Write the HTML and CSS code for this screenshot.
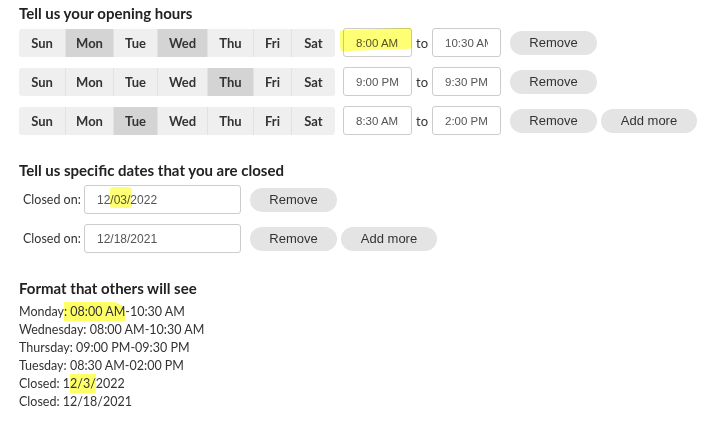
FILE: index.html
```html
<!DOCTYPE html>
<html lang="en">
<head>
    <meta charset="UTF-8">
    <title>Opening hours</title>
    <link rel="stylesheet" href="styles.css">
</head>
<body>
    <div class="page">
        <h2>Tell us your opening hours</h2>
        <div class="hours-list">
            <div class="hours-row">
                <div class="days">
                    <span class="day">Sun</span>
                    <span class="day on">Mon</span>
                    <span class="day">Tue</span>
                    <span class="day on">Wed</span>
                    <span class="day">Thu</span>
                    <span class="day">Fri</span>
                    <span class="day">Sat</span>
                </div>
                <input class="time" type="text" value="8:00 AM">
                <span class="to">to</span>
                <input class="time" type="text" value="10:30 AM">
                <button class="pill">Remove</button>
            </div>
            <div class="hours-row">
                <div class="days">
                    <span class="day">Sun</span>
                    <span class="day">Mon</span>
                    <span class="day">Tue</span>
                    <span class="day">Wed</span>
                    <span class="day on">Thu</span>
                    <span class="day">Fri</span>
                    <span class="day">Sat</span>
                </div>
                <input class="time" type="text" value="9:00 PM">
                <span class="to">to</span>
                <input class="time" type="text" value="9:30 PM">
                <button class="pill">Remove</button>
            </div>
            <div class="hours-row">
                <div class="days">
                    <span class="day">Sun</span>
                    <span class="day">Mon</span>
                    <span class="day on">Tue</span>
                    <span class="day">Wed</span>
                    <span class="day">Thu</span>
                    <span class="day">Fri</span>
                    <span class="day">Sat</span>
                </div>
                <input class="time" type="text" value="8:30 AM">
                <span class="to">to</span>
                <input class="time" type="text" value="2:00 PM">
                <button class="pill">Remove</button>
                <button class="pill wide">Add more</button>
            </div>
        </div>

        <h2 class="next">Tell us specific dates that you are closed</h2>
        <div class="closed-list">
            <div class="closed-row">
                <label>Closed on:</label>
                <input class="date" type="text" value="12/03/2022">
                <button class="pill">Remove</button>
            </div>
            <div class="closed-row">
                <label>Closed on:</label>
                <input class="date" type="text" value="12/18/2021">
                <button class="pill">Remove</button>
                <button class="pill wide">Add more</button>
            </div>
        </div>

        <h2 class="next">Format that others will see</h2>
        <div class="preview">
            <div>Monday<span class="hl curl">: 08:00 AM</span>-10:30 AM</div>
            <div>Wednesday: 08:00 AM-10:30 AM</div>
            <div>Thursday: 09:00 PM-09:30 PM</div>
            <div>Tuesday: 08:30 AM-02:00 PM</div>
            <div>Closed: 1<span class="hl">2/3/</span>2022</div>
            <div>Closed: 12/18/2021</div>
        </div>
    </div>

    <!-- marker strokes that sit over the input boxes -->
    <div class="marker m1"></div>
    <div class="marker m2"></div>
</body>
</html>
```

FILE: styles.css
```css
* {
    margin: 0;
    padding: 0;
    box-sizing: border-box;
}

body {
    font-family: 'Lato', sans-serif;
    background: #fff;
    color: #333;
}

.page {
    padding: 3px 0 0 19px;
}

h2 {
    font-size: 15px;
    font-weight: bold;
    line-height: 20px;
    color: #222;
    margin-bottom: 5px;
}

h2.next {
    margin-top: 25px;
}

.hours-list, .closed-list {
    display: flex;
    flex-direction: column;
    gap: 10px;
}

.hours-row, .closed-row {
    display: flex;
    align-items: center;
    height: 29px;
}

.hours-row > *, .closed-row > * {
    flex-shrink: 0;
}

.days {
    display: grid;
    grid-template-columns: 46px 48px 44px 50px 46px 38px 44px;
    height: 28px;
    background: #efefef;
    border-radius: 3px;
    overflow: hidden;
    margin-right: 8px;
}

.day {
    display: flex;
    align-items: center;
    justify-content: center;
    font-size: 13px;
    font-weight: bold;
    color: #333;
    border-left: 1px solid #e2e2e2;
}

.day:first-child {
    border-left: none;
}

.day.on {
    background: #d4d4d4;
}

input {
    height: 29px;
    border: 1px solid #ccc;
    border-radius: 3px;
    background: #fff;
    font-family: 'Liberation Sans', Arial, sans-serif;
    font-size: 12px;
    color: #555;
    padding: 0 12px;
    outline: none;
}

.time {
    width: 69px;
    font-size: 11.5px;
}

.to {
    font-size: 13px;
    margin: 0 4px;
}

.pill {
    height: 24px;
    width: 87px;
    border: none;
    border-radius: 12px;
    background: #e4e4e4;
    font-family: 'Liberation Sans', Arial, sans-serif;
    font-size: 13px;
    color: #333;
    margin-left: 9px;
    cursor: pointer;
}

.pill.wide {
    width: 96px;
    margin-left: 4px;
}

.closed-list {
    margin-top: 1px;
}

.closed-row label {
    font-size: 12.5px;
    width: 65px;
    padding-left: 4px;
}

.date {
    width: 157px;
}

.preview {
    margin-top: 1px;
    font-size: 12.5px;
    line-height: 18px;
    color: #333;
}

.hl {
    background: #ffff66;
    padding: 2px 0;
}

.hl.curl {
    border-radius: 0 12px 0 0;
}

.marker {
    position: absolute;
    background: rgba(255, 255, 60, 0.7);
    mix-blend-mode: multiply;
    border-radius: 3px;
}

.m1 { left: 340px; top: 29px; width: 72px; height: 21px; transform: rotate(-2deg); }
.m2 { left: 110px; top: 187px; width: 22px; height: 21px; }
```
